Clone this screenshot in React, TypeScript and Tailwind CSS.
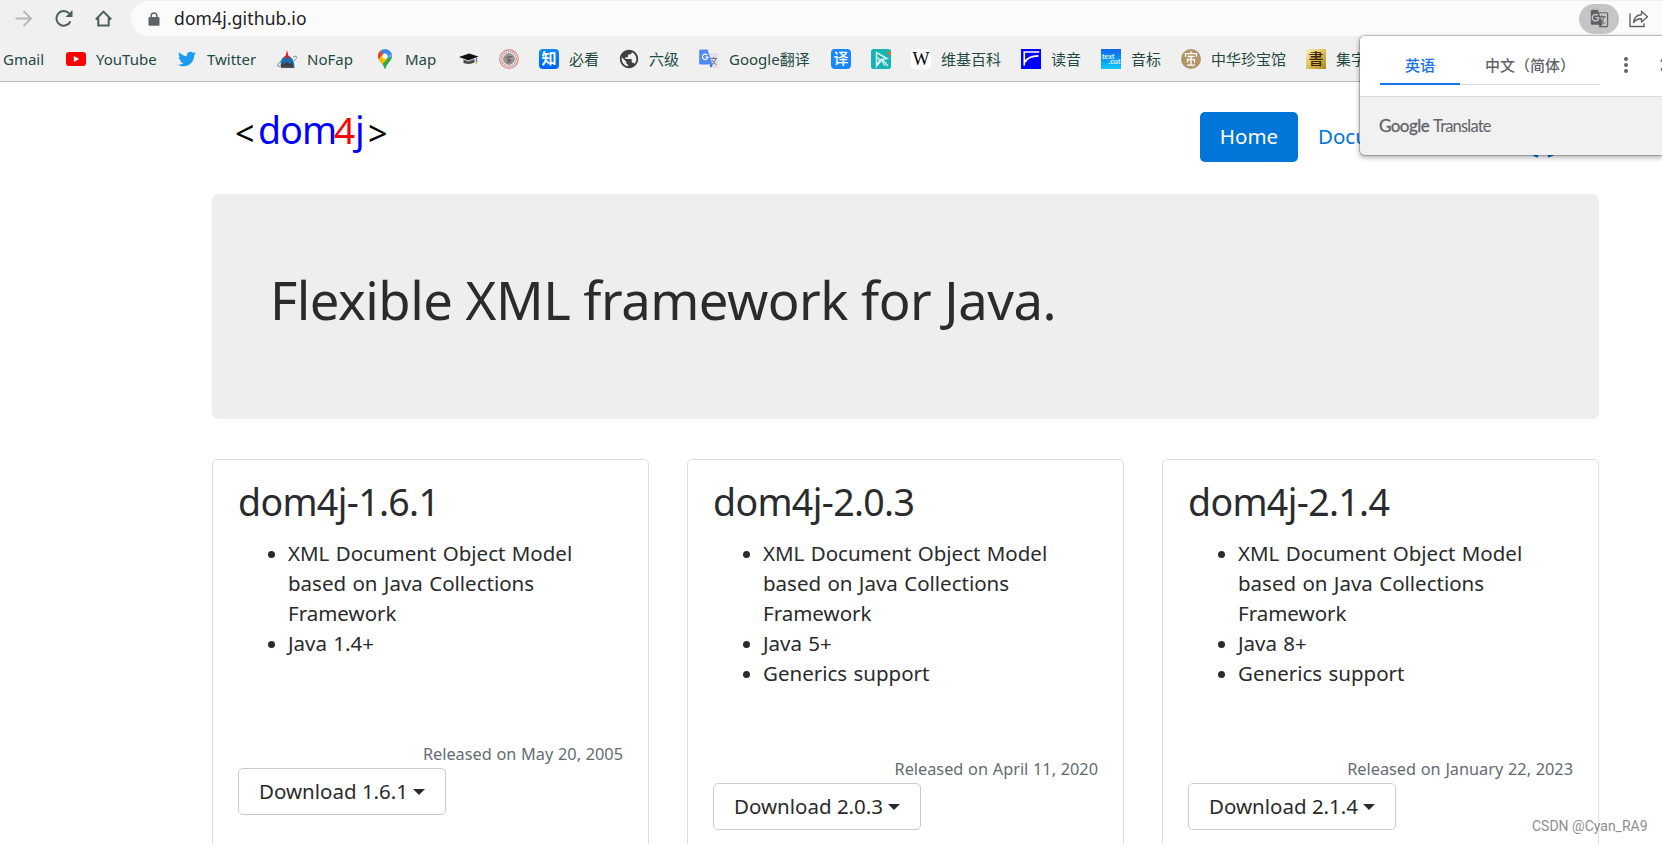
import type { ReactNode } from "react";
import { FaGithub, FaTwitter } from "react-icons/fa";
import { MdGTranslate, MdPublic, MdLock } from "react-icons/md";

type Bookmark = { icon?: ReactNode; label?: string; width?: string };

const bookmarks: Bookmark[] = [
  { label: "Gmail", width: "w-[43px]" },
  {
    icon: (
      <svg viewBox="0 0 20 20" className="size-5">
        <rect x="0" y="3" width="20" height="14" rx="3" fill="#f00" />
        <path d="M7.8 7v6l5.4-3z" fill="#fff" />
      </svg>
    ),
    label: "YouTube",
    width: "w-[61px]",
  },
  { icon: <FaTwitter className="ml-[1px] size-[18px] text-[#1d9bf0]" />, label: "Twitter", width: "w-[50px]" },
  {
    icon: (
      <svg viewBox="0 0 20 20" className="size-5">
        <path d="M3.500 17 Q3.500 7.500 10 6.500 Q16.500 7.500 17.500 17z" fill="#1a6fb5" />
        <path d="M3.400 18l2.600-4.500 2 1.500 2-2.500 2.500 2.500 2-1.500 2.500 4.500z" fill="#3b3f45" />
        <path d="M10 1l1.200 5 1.300 2.500-2.500 1.300-2.500-1.300 1.300-2.500z" fill="#e02020" />
        <path d="M4 12C0 16-1 18 3 17.200M16 8c4-2 5 .5 1 4" fill="none" stroke="#7c7f83" strokeWidth="1" />
        <path d="M4 18.300h13.500" stroke="#555" strokeWidth="1.500" />
      </svg>
    ),
    label: "NoFap",
    width: "w-[48px]",
  },
  {
    icon: (
      <svg viewBox="0 0 20 20" className="size-5">
        <clipPath id="pin">
          <path d="M10 .3a7 7 0 0 0-7 7c0 2 .8 3.500 2 5 2 2.400 3.600 4 4.100 6.500.2 1.200 1.600 1.200 1.800 0 .5-2.500 2.100-4.100 4.100-6.500 1.200-1.500 2-3 2-5a7 7 0 0 0-7-7z" />
        </clipPath>
        <g clipPath="url(#pin)">
          <path d="M0 0h20v20H0z" fill="#34a853" />
          <path d="M5 0h15v4l-10 4z" fill="#4285f4" />
          <path d="M12 9l7-8v6z" fill="#6ba4f8" />
          <path d="M0 0h5l3 5.500-3 5L0 8z" fill="#ea4335" />
          <path d="M0 14l8-9 4 5-7 8z" fill="#fbbc04" />
        </g>
        <circle cx="10" cy="7.200" r="2.600" fill="#fff" />
      </svg>
    ),
    label: "Map",
    width: "w-[34px]",
  },
  {
    icon: (
      <svg viewBox="0 0 20 20" className="size-5">
        <path d="M0 8l10-3.500L19.500 7.500 9.500 11.500z" fill="#111" />
        <path d="M4.500 10.500l5 2 6-2.400v3.400q-5 2.500-11 .5z" fill="#4a4a4a" />
        <path d="M17.500 8.500v5" stroke="#4d83c4" strokeWidth="1.200" />
        <path d="M17 13l.5 2" stroke="#d8b24a" strokeWidth="1.200" />
      </svg>
    ),
  },
  {
    icon: (
      <svg viewBox="0 0 20 20" className="size-5">
        <circle cx="10" cy="10" r="9.300" fill="#f3e6e6" stroke="#dd8b8b" strokeWidth="1.200" />
        <circle cx="10" cy="10" r="7.300" fill="none" stroke="#a99a9a" strokeWidth="1.400" strokeDasharray="1.300 .9" />
        <circle cx="10" cy="10" r="5.300" fill="#a39c9c" stroke="#7a7474" strokeWidth=".8" />
        <path d="M6.500 8.500l7-1M7 11h6.500M8 13.200l4-.6M10 6.500v7" stroke="#5f5a5a" strokeWidth="1" />
      </svg>
    ),
  },
  {
    icon: (
      <span className="flex size-5 items-center justify-center rounded-[4px] bg-linear-to-b from-[#0a8bff] to-[#0062ff] text-[15px] leading-none font-bold text-white">
        知
      </span>
    ),
    label: "必看",
    width: "w-[30px]",
  },
  { icon: <MdPublic className="size-[22px] shrink-0 -translate-x-[1px] text-[#3c4043]" />, label: "六级", width: "w-[30px]" },
  {
    icon: (
      <svg viewBox="0 0 20 20" className="size-5">
        <path d="M8 4h10a1.500 1.500 0 0 1 1.500 1.500v12A1.500 1.500 0 0 1 18 19h-6.500z" fill="#dfe1e5" />
        <path d="M11.500 9.500h6.500M14.700 8v1.500M17 9.500q-1 4-4.500 6M13 11q1.500 3.500 4.500 4.500" fill="none" stroke="#6b7683" strokeWidth="1" />
        <path d="M11 15.500h3L11.500 19z" fill="#1f52c4" />
        <path d="M1.500.5h7l5 15h-12A1.300 1.300 0 0 1 .2 14.200V1.800A1.300 1.300 0 0 1 1.500.5z" fill="#4f8af5" />
        <path d="M8.300 6.100A2.700 2.700 0 1 0 8.900 8.200H6.300" fill="none" stroke="#fff" strokeWidth="1.200" />
      </svg>
    ),
    label: "Google翻译",
    width: "w-[82px]",
  },
  {
    icon: (
      <span className="flex size-5 items-center justify-center rounded-[4px] bg-[#1787fb] text-[15px] leading-none font-medium text-white">
        译
      </span>
    ),
  },
  {
    icon: (
      <svg viewBox="0 0 20 20" className="size-5">
        <rect width="20" height="20" rx="2.500" fill="#18b3b5" />
        <path d="M5.500 17V3.500L16 9.500 9 11z" fill="none" stroke="#d8f5f3" strokeWidth="1.500" />
        <path d="M7 16l4-6 6 7M11 12l3 5M5.500 8l4 3" fill="none" stroke="#d8f5f3" strokeWidth="1.300" />
        <path d="M16 4l4-2v4.500z" fill="#ff6a13" />
      </svg>
    ),
  },
  {
    icon: (
      <span className="flex size-5 items-center justify-center rounded-[4px] bg-white font-['Liberation_Serif',serif] text-[18px] leading-none text-black">
        W
      </span>
    ),
    label: "维基百科",
    width: "w-[60px]",
  },
  {
    icon: (
      <svg viewBox="0 0 20 20" className="size-5">
        <path d="M0 0h20v20H0z" fill="#00f" />
        <path d="M3.300 16.500V3h15M4 13q3-6 13.500-6.200" fill="none" stroke="#fff" strokeWidth="1.700" />
      </svg>
    ),
    label: "读音",
    width: "w-[30px]",
  },
  {
    icon: (
      <span className="flex size-5 flex-col justify-center bg-linear-to-b from-[#1763e8] to-[#15c8ff] font-['Liberation_Sans',sans-serif] text-[7px] leading-[5px] font-bold text-white/85">
        <span className="pl-px">text</span>
        <span className="pl-[7px]">.cut</span>
      </span>
    ),
    label: "音标",
    width: "w-[30px]",
  },
  {
    icon: (
      <svg viewBox="0 0 20 20" className="size-5">
        <circle cx="10" cy="10" r="10" fill="#b39467" />
        <path
          d="M10 2.300v2M4.500 7.800V4.700h11v3.100M6.500 7.500h7M10 7.500V16M6.500 10.500v-1M6.500 10.700h7v3M6 16.200h8M6.500 13.500v-3"
          fill="none"
          stroke="#fff"
          strokeWidth="1.300"
        />
      </svg>
    ),
    label: "中华珍宝馆",
    width: "w-[75px]",
  },
  {
    icon: (
      <span className="flex size-5 items-center justify-center bg-linear-to-br from-[#f4f3b8] via-[#dcc257] to-[#a8861a] text-[15px] leading-none font-medium text-[#3f220b]">
        書
      </span>
    ),
    label: "集字",
    width: "w-[30px]",
  },
];

const releases = [
  { version: "1.6.1", java: "Java 1.4+", generics: false, date: "May 20, 2005" },
  { version: "2.0.3", java: "Java 5+", generics: true, date: "April 11, 2020" },
  { version: "2.1.4", java: "Java 8+", generics: true, date: "January 22, 2023" },
];

function AddressBar() {
  return (
    <div className="flex h-9 items-center pt-px">
      <svg viewBox="0 0 20 20" className="ml-[13px] size-5 shrink-0" fill="none" stroke="#b2b8b5" strokeWidth="1.800">
        <path d="M2.500 9.500h15M10.500 2l7.500 7.500L10.500 17" />
      </svg>
      <svg viewBox="0 0 20 20" className="ml-[21px] size-5 shrink-0">
        <path d="M16.400 12.300A7.300 7.300 0 1 1 15 4.300" fill="none" stroke="#4b5f59" strokeWidth="2" />
        <path d="M18.500 1v7h-7z" fill="#4b5f59" />
      </svg>
      <svg viewBox="0 0 20 20" className="ml-[20px] size-5 shrink-0" fill="none" stroke="#4b5f59" strokeWidth="2">
        <path d="M1.800 10.500L9.500 2.600l7.700 7.900M4.300 9v7.500h10.400V9" />
      </svg>
      <div className="ml-[17px] flex h-[35px] flex-1 items-center rounded-l-full bg-[#fbfbfb]">
        <svg viewBox="0 0 12 14" className="ml-[17px] h-[14px] w-3 shrink-0">
          <rect x=".5" y="5" width="11" height="8.700" rx="1.200" fill="#5f6368" />
          <path d="M3.200 5.500V3.700a2.800 2.800 0 0 1 5.600 0v1.800" fill="none" stroke="#5f6368" strokeWidth="1.500" />
        </svg>
        <span className="mb-[2px] ml-[14px] flex-1 text-[17.500px] leading-[26px] tracking-[0.130px] text-[#202124]">
          dom4j.github.io
        </span>
        <span className="flex h-[30px] w-10 items-center justify-center rounded-full bg-[#c5c5c5]">
          <MdGTranslate className="size-[19px] text-[#5f6368]" />
        </span>
        <svg viewBox="0 0 20 20" className="mr-[13px] ml-[10px] size-5 shrink-0" fill="none" stroke="#5f6368" strokeWidth="1.400">
          <path d="M1 4.500v13h14v-3" />
          <path d="M4.500 13.500Q5.500 6 12.500 5.800V2.300L18.500 7.700 12.500 13V9.700Q7.500 9.500 4.500 13.500z" strokeLinejoin="round" />
        </svg>
      </div>
    </div>
  );
}

function BookmarksBar() {
  return (
    <div className="flex h-[45px] items-center gap-5 pl-[3px] text-[15px] text-[#1f4a42]">
      {bookmarks.map((b, i) => (
        <div key={i} className="flex h-5 shrink-0 items-center gap-[10px]">
          {b.icon && <span className="flex size-5 shrink-0 items-center">{b.icon}</span>}
          {b.label && <span className={`${b.width} leading-5 whitespace-nowrap`}>{b.label}</span>}
        </div>
      ))}
    </div>
  );
}

function TranslatePopup() {
  return (
    <div className="absolute top-[36px] left-[1360px] h-[119px] w-[302px] overflow-hidden rounded-l-[5px] bg-[#f1f1f1] shadow-[0_0_1px_1px_rgba(0,0,0,0.220),0_2px_5px_1px_rgba(0,0,0,0.280)]">
      <div className="flex h-[61px] border-b border-[#dadce0] bg-white pl-5 text-[15px] font-medium">
        <div className="flex h-[49px] w-20 shrink-0 items-center justify-center border-b-2 border-[#1a73e8] pt-[11px] text-[#1a73e8]">
          英语
        </div>
        <div className="flex h-[49px] w-[140px] shrink-0 items-center justify-center border-b border-[#dadce0] pt-[11px] text-[#5f6368]">
          中文（简体）
        </div>
        <svg viewBox="0 0 4 16" className="mt-[21px] ml-6 h-4 w-1 shrink-0" fill="#5f6368">
          <circle cx="2" cy="2" r="2" />
          <circle cx="2" cy="8" r="2" />
          <circle cx="2" cy="14" r="2" />
        </svg>
        <svg viewBox="0 0 12 12" className="mt-[23px] ml-[32px] size-3 shrink-0" fill="none" stroke="#5f6368" strokeWidth="2">
          <path d="M1 1l10 10M11 1L1 11" />
        </svg>
      </div>
      <div className="flex items-baseline gap-[4px] pt-[17px] pl-[19px] font-['Lato',sans-serif] text-[17px] leading-6 text-[#5f6368]">
        <span className="w-[50px] tracking-[-0.550px] [-webkit-text-stroke:0.300px_#5f6368]">Google</span>
        <span className="text-[16.500px] tracking-[-0.800px]">Translate</span>
      </div>
    </div>
  );
}

function Header() {
  return (
    <header className="flex h-28 items-start pl-[23px]">
      <div className="mt-[18px] flex text-[37.500px] leading-[60px] text-[#00f]">
        <span className="w-[23px] pt-[3px] text-[34px] text-black">&lt;</span>
        <span className="w-[76px] tracking-[-0.900px]">dom</span>
        <span className="w-[21px] text-[37px] text-[#f00]">4</span>
        <span className="w-[13px]">j</span>
        <span className="pt-[3px] text-[34px] text-black">&gt;</span>
      </div>
      <nav className="mt-[30px] mr-[36px] ml-auto flex items-start text-[20.500px] leading-[30px] text-[#0275d8]">
        <a className="flex h-[50px] w-[98px] items-center justify-center rounded-[5px] bg-[#0275d8] pb-[2px] text-white">Home</a>
        <a className="flex h-[50px] w-[225px] items-center pb-[2px] pl-5">Docu</a>
        <a className="pt-[7px]">
          <FaGithub className="size-10" />
        </a>
      </nav>
    </header>
  );
}

function ReleaseCard({ version, java, generics, date }: (typeof releases)[number]) {
  const features = ["XML Document Object Model based on Java Collections Framework", java];
  if (generics) features.push("Generics support");
  return (
    <article className="flex h-[420px] w-[437px] flex-col items-start rounded-[5px] border border-[#dfdfdf] px-[25px] pt-5">
      <h3 className="mb-[14px] text-[37.500px] leading-[44px] tracking-[-0.650px]">dom4j-{version}</h3>
      <ul className="min-h-[135px] pl-[30px] text-[20.500px] leading-[30px] [word-spacing:1px]">
        {features.map((f) => (
          <li key={f} className="flex">
            <span className="mt-[13px] mr-[13px] size-[7px] shrink-0 rounded-full bg-[#292b2c]" />
            <span className="w-[300px]">{f}</span>
          </li>
        ))}
      </ul>
      <p className="mt-[69px] mb-[2px] self-end text-[16.300px] leading-6 text-[#636c72] [word-spacing:0.5px]">Released on {date}</p>
      <button className="flex h-[47px] w-[208px] items-center justify-between rounded-[5px] border border-[#ccc] pr-5 pb-[2px] pl-[20px] text-[20.500px] leading-[30px] whitespace-nowrap">
        Download {version}
        <svg viewBox="0 0 12 6" className="mt-[3px] h-[6px] w-3" fill="#292b2c">
          <path d="M0 0h12L6 6z" />
        </svg>
      </button>
    </article>
  );
}

export default function App() {
  return (
    <div className="relative h-[844px] w-[1662px] overflow-hidden bg-white font-['Noto_Sans','Noto_Sans_CJK_SC',sans-serif] text-[#292b2c]">
      <div className="h-[82px] overflow-hidden border-b border-[#b9bcbb] bg-[#f0f0f0]">
        <AddressBar />
        <BookmarksBar />
      </div>
      <main className="ml-[212px] w-[1387px]">
        <Header />
        <section className="h-[225px] rounded-[6px] bg-[#eceeef] pt-[76px] pl-[58px]">
          <h1 className="text-[52.600px] leading-[60px] tracking-[-0.500px]">Flexible XML framework for Java.</h1>
        </section>
        <section className="mt-10 flex justify-between">
          {releases.map((r) => (
            <ReleaseCard key={r.version} {...r} />
          ))}
        </section>
      </main>
      <TranslatePopup />
      <span className="absolute top-[816px] left-[1532px] font-['Roboto',sans-serif] text-[14px] leading-5 text-[#8e8e8e]">
        CSDN @Cyan_RA9
      </span>
    </div>
  );
}
